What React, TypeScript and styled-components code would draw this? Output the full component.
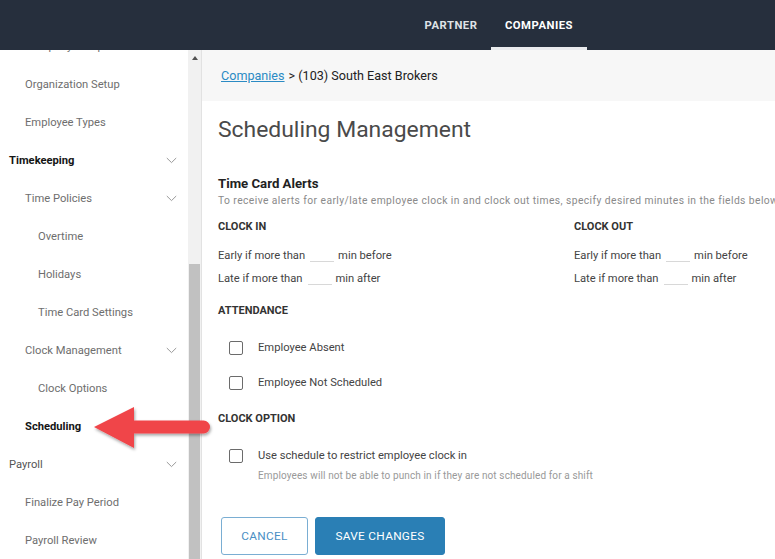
import React from "react";
import styled, { createGlobalStyle } from "styled-components";

const Global = createGlobalStyle`
  html, body { margin: 0; padding: 0; }
  body {
    font-family: Roboto, "Noto Sans", "Liberation Sans", sans-serif;
    background: #ffffff;
    width: 775px;
    height: 559px;
    overflow: hidden;
  }
  * { box-sizing: border-box; }
`;

const Page = styled.div`
  width: 775px;
  height: 559px;
  display: flex;
  flex-direction: column;
  position: relative;
  overflow: hidden;
`;

const Header = styled.header`
  height: 50px;
  flex: 0 0 50px;
  background: #262f3d;
  display: flex;
  align-items: stretch;
  padding-left: 411px;
`;

const NavItem = styled.div<{ $active?: boolean }>`
  display: flex;
  align-items: center;
  justify-content: center;
  width: ${(p) => (p.$active ? 96 : 80)}px;
  font-size: 11.3px;
  font-weight: 700;
  letter-spacing: 0.5px;
  color: ${(p) => (p.$active ? "#ffffff" : "#dfe2e6")};
  border-bottom: 3px solid ${(p) => (p.$active ? "#e9ebee" : "transparent")};
  padding-top: 3px;
`;

const Body = styled.div`
  flex: 1;
  display: flex;
  min-height: 0;
`;

const Sidebar = styled.nav`
  width: 188px;
  flex: 0 0 188px;
  overflow: hidden;
  background: #fff;
`;

const SideList = styled.div`
  margin-top: -23px;
  display: flex;
  flex-direction: column;
`;

const SideItem = styled.div<{ $level: number; $bold?: boolean; $dark?: boolean }>`
  height: 38px;
  display: flex;
  align-items: center;
  justify-content: space-between;
  padding-left: ${(p) => (p.$level === 0 ? 9 : p.$level === 1 ? 25 : 38)}px;
  padding-right: 11px;
  font-size: 11.2px;
  font-weight: ${(p) => (p.$bold ? 700 : 400)};
  color: ${(p) => (p.$bold ? "#151515" : p.$dark ? "#555" : "#6e6e6e")};
`;

const Scrollbar = styled.div`
  width: 14px;
  flex: 0 0 14px;
  background: #f1f1f1;
  border-right: 1px solid #e2e2e2;
  display: flex;
  flex-direction: column;
  align-items: center;
  padding-top: 6px;
`;

const ScrollArrow = styled.div`
  width: 0;
  height: 0;
  border-left: 3.5px solid transparent;
  border-right: 3.5px solid transparent;
  border-bottom: 4px solid #505050;
`;

const ScrollThumb = styled.div`
  width: 11px;
  margin-right: 1px;
  margin-top: 204px;
  flex: 1;
  background: #c1c1c1;
`;

const Main = styled.main`
  flex: 1;
  min-width: 0;
  overflow: hidden;
  display: flex;
  flex-direction: column;
`;

const Breadcrumb = styled.div`
  height: 51px;
  flex: 0 0 51px;
  background: #f7f7f7;
  display: flex;
  align-items: center;
  padding-left: 19px;
  font-size: 12.6px;
  color: #222;
  white-space: nowrap;
`;

const Crumb = styled.a`
  color: #2b8bc4;
  text-decoration: underline;
  margin-right: 4px;
`;

const Content = styled.div`
  padding-left: 16px;
  display: flex;
  flex-direction: column;
  align-items: flex-start;
`;

const Title = styled.h1`
  margin: 14px 0 0 0;
  font-size: 22.9px;
  line-height: 30px;
  font-weight: 400;
  color: #4a4a4a;
`;

const SectionTitle = styled.h2`
  margin: 31px 0 0 0;
  font-size: 13.2px;
  line-height: 16px;
  font-weight: 700;
  color: #222;
`;

const Description = styled.p`
  margin: 2px 0 0 0;
  font-size: 10.3px;
  line-height: 14px;
  letter-spacing: 0.42px;
  color: #8a8a8a;
  white-space: nowrap;
`;

const ClockGrid = styled.div`
  margin-top: 12px;
  display: grid;
  grid-template-columns: 356px auto;
`;

const ClockCol = styled.div`
  display: flex;
  flex-direction: column;
`;

const Label = styled.div<{ $gap: number }>`
  margin-top: ${(p) => p.$gap}px;
  font-size: 11px;
  line-height: 14px;
  font-weight: 700;
  color: #333;
  text-transform: uppercase;
`;

const AlertRow = styled.div<{ $gap: number }>`
  margin-top: ${(p) => p.$gap}px;
  height: 20px;
  display: flex;
  align-items: center;
  font-size: 11.2px;
  color: #444;
  white-space: nowrap;
`;

const MinInput = styled.span`
  display: inline-block;
  width: 24px;
  height: 17px;
  margin: 0 4px 0 5px;
  border-bottom: 1px solid #d8d8d8;
  align-self: flex-start;
`;

const CheckRow = styled.div<{ $gap: number }>`
  margin-top: ${(p) => p.$gap}px;
  padding-left: 11px;
  display: flex;
  align-items: flex-start;
  min-height: 24px;
`;

const Box = styled.span`
  display: inline-block;
  width: 14px;
  height: 14px;
  margin-top: 5px;
  border: 1.5px solid #6b6b6b;
  border-radius: 2px;
  flex: 0 0 14px;
`;

const CheckText = styled.div`
  margin-left: 15px;
  display: flex;
  flex-direction: column;
`;

const CheckLabel = styled.span`
  font-size: 11.2px;
  line-height: 24px;
  color: #444;
  white-space: nowrap;
`;

const Helper = styled.span`
  font-size: 10px;
  line-height: 14px;
  margin-top: 1px;
  letter-spacing: 0.12px;
  color: #999;
  white-space: nowrap;
`;

const Buttons = styled.div`
  margin-top: 34px;
  margin-left: 3px;
  display: flex;
  gap: 7px;
`;

const Button = styled.button<{ $primary?: boolean }>`
  height: 38px;
  padding: 0;
  width: ${(p) => (p.$primary ? 130 : 87)}px;
  border-radius: 3px;
  font-family: inherit;
  font-size: 11.8px;
  letter-spacing: 0.3px;
  border: 1px solid ${(p) => (p.$primary ? "#2a7fb5" : "#7aaed3")};
  background: ${(p) => (p.$primary ? "#2a7fb5" : "#ffffff")};
  color: ${(p) => (p.$primary ? "#ffffff" : "#4a8fc4")};
`;

const Arrow = styled.svg`
  position: absolute;
  left: 91px;
  top: 402px;
  width: 126px;
  height: 54px;
  overflow: visible;
`;

const Chevron = () => (
  <svg width="11" height="7" viewBox="0 0 11 7">
    <path d="M0.8 1 L5.5 5.6 L10.2 1" fill="none" stroke="#999" strokeWidth="1" />
  </svg>
);

type Item = { text: string; level: number; bold?: boolean; dark?: boolean; chevron?: boolean };

const items: Item[] = [
  { text: "Company Setup", level: 1 },
  { text: "Organization Setup", level: 1 },
  { text: "Employee Types", level: 1 },
  { text: "Timekeeping", level: 0, bold: true, chevron: true },
  { text: "Time Policies", level: 1, chevron: true },
  { text: "Overtime", level: 2 },
  { text: "Holidays", level: 2 },
  { text: "Time Card Settings", level: 2 },
  { text: "Clock Management", level: 1, chevron: true },
  { text: "Clock Options", level: 2 },
  { text: "Scheduling", level: 1, bold: true },
  { text: "Payroll", level: 0, dark: true, chevron: true },
  { text: "Finalize Pay Period", level: 1 },
  { text: "Payroll Review", level: 1 },
];

export default function App() {
  return (
    <Page>
      <Global />
      <Header>
        <NavItem>PARTNER</NavItem>
        <NavItem $active>COMPANIES</NavItem>
      </Header>
      <Body>
        <Sidebar>
          <SideList>
            {items.map((it) => (
              <SideItem key={it.text} $level={it.level} $bold={it.bold} $dark={it.dark}>
                <span>{it.text}</span>
                {it.chevron && <Chevron />}
              </SideItem>
            ))}
          </SideList>
        </Sidebar>
        <Scrollbar>
          <ScrollArrow />
          <ScrollThumb />
        </Scrollbar>
        <Main>
          <Breadcrumb>
            <Crumb>Companies</Crumb>
            {"> (103) South East Brokers"}
          </Breadcrumb>
          <Content>
            <Title>Scheduling Management</Title>
            <SectionTitle>Time Card Alerts</SectionTitle>
            <Description>
              To receive alerts for early/late employee clock in and clock out times, specify desired minutes in the fields below.
            </Description>
            <ClockGrid>
              <ClockCol>
                <Label $gap={0}>Clock In</Label>
                <AlertRow $gap={11}>
                  Early if more than<MinInput />min before
                </AlertRow>
                <AlertRow $gap={3}>
                  Late if more than<MinInput />min after
                </AlertRow>
              </ClockCol>
              <ClockCol>
                <Label $gap={0}>Clock Out</Label>
                <AlertRow $gap={11}>
                  Early if more than<MinInput />min before
                </AlertRow>
                <AlertRow $gap={3}>
                  Late if more than<MinInput />min after
                </AlertRow>
              </ClockCol>
            </ClockGrid>
            <Label $gap={16}>Attendance</Label>
            <CheckRow $gap={18}>
              <Box />
              <CheckText>
                <CheckLabel>Employee Absent</CheckLabel>
              </CheckText>
            </CheckRow>
            <CheckRow $gap={11}>
              <Box />
              <CheckText>
                <CheckLabel>Employee Not Scheduled</CheckLabel>
              </CheckText>
            </CheckRow>
            <Label $gap={17}>Clock Option</Label>
            <CheckRow $gap={18}>
              <Box />
              <CheckText>
                <CheckLabel>Use schedule to restrict employee clock in</CheckLabel>
                <Helper>Employees will not be able to punch in if they are not scheduled for a shift</Helper>
              </CheckText>
            </CheckRow>
            <Buttons>
              <Button>CANCEL</Button>
              <Button $primary>SAVE CHANGES</Button>
            </Buttons>
          </Content>
        </Main>
      </Body>
      <Arrow viewBox="0 0 126 54">
        <defs>
          <filter id="sh" x="-20%" y="-30%" width="140%" height="170%">
            <feDropShadow dx="1" dy="2" stdDeviation="1.6" floodColor="#000" floodOpacity="0.35" />
          </filter>
        </defs>
        <g filter="url(#sh)" fill="#f0444a">
          <path d="M3 25 L43 5 L43 18.5 L112.5 18.5 A6.5 6.5 0 0 1 112.5 31.5 L43 31.5 L43 46 Z" />
        </g>
      </Arrow>
    </Page>
  );
}
